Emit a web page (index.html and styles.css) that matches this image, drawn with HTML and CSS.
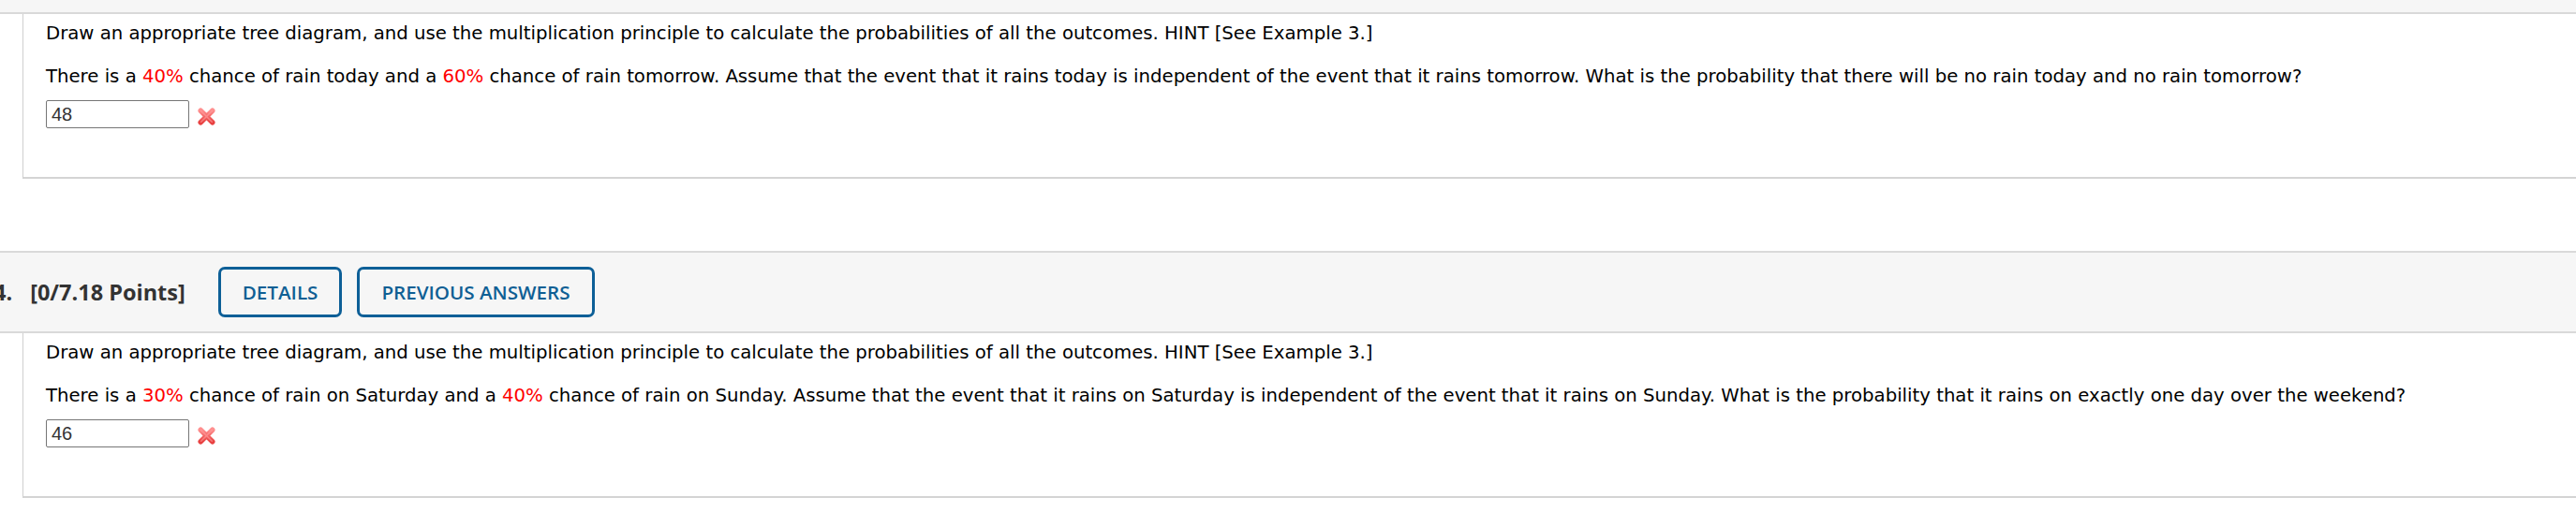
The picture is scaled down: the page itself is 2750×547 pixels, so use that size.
FILE: index.html
```
<!DOCTYPE html>
<html lang="en">
<head>
<meta charset="utf-8">
<title>Questions</title>
<link rel="stylesheet" href="styles.css">
</head>
<body>
<div class="topbar"></div>
<section class="qbox">
  <p class="qtext">Draw an appropriate tree diagram, and use the multiplication principle to calculate the probabilities of all the outcomes. HINT [See Example 3.]</p>
  <p class="qtext second">There is a <span class="red">40%</span> chance of rain today and a <span class="red">60%</span> chance of rain tomorrow. Assume that the event that it rains today is independent of the event that it rains tomorrow. What is the probability that there will be no rain today and no rain tomorrow?</p>
  <div class="answer">
    <input class="ans-input" type="text" value="48">
    <svg class="wrong" viewBox="0 0 20 20" width="21" height="21" aria-hidden="true">
      <defs>
        <linearGradient id="xg1" x1="0" y1="0" x2="0" y2="1">
          <stop offset="0" stop-color="#ff8f8f"/>
          <stop offset="1" stop-color="#e84040"/>
        </linearGradient>
      </defs>
      <path d="M4 4 L16 16 M16 4 L4 16" stroke="url(#xg1)" stroke-width="5.2" stroke-linecap="round" fill="none"/>
      <path d="M4.5 4.5 L15.5 15.5 M15.5 4.5 L4.5 15.5" stroke="#ffa0a0" stroke-width="1.4" stroke-linecap="round" fill="none" opacity="0.6"/>
    </svg>
  </div>
</section>

<header class="qhead">
  <span class="qnum">4.</span>
  <span class="qpts">[0/7.18 Points]</span>
  <div class="btns">
    <button class="btn">DETAILS</button>
    <button class="btn">PREVIOUS ANSWERS</button>
  </div>
</header>
<section class="qbox">
  <p class="qtext">Draw an appropriate tree diagram, and use the multiplication principle to calculate the probabilities of all the outcomes. HINT [See Example 3.]</p>
  <p class="qtext second">There is a <span class="red">30%</span> chance of rain on Saturday and a <span class="red">40%</span> chance of rain on Sunday. Assume that the event that it rains on Saturday is independent of the event that it rains on Sunday. What is the probability that it rains on exactly one day over the weekend?</p>
  <div class="answer">
    <input class="ans-input" type="text" value="46">
    <svg class="wrong" viewBox="0 0 20 20" width="21" height="21" aria-hidden="true">
      <defs>
        <linearGradient id="xg2" x1="0" y1="0" x2="0" y2="1">
          <stop offset="0" stop-color="#ff8f8f"/>
          <stop offset="1" stop-color="#e84040"/>
        </linearGradient>
      </defs>
      <path d="M4 4 L16 16 M16 4 L4 16" stroke="url(#xg2)" stroke-width="5.2" stroke-linecap="round" fill="none"/>
      <path d="M4.5 4.5 L15.5 15.5 M15.5 4.5 L4.5 15.5" stroke="#ffa0a0" stroke-width="1.4" stroke-linecap="round" fill="none" opacity="0.6"/>
    </svg>
  </div>
</section>
</body>
</html>
```
FILE: styles.css
```
html, body {
  margin: 0;
  padding: 0;
  background: #ffffff;
}
body {
  font-family: "DejaVu Sans", Verdana, sans-serif;
  color: #000;
  overflow: hidden;
}

.topbar {
  height: 13px;
  background: #f6f6f6;
  border-bottom: 2px solid #d9d9d9;
}

.qbox {
  margin-left: 24px;
  border-left: 1px solid #cfcfcf;
  border-bottom: 2px solid #d4d4d4;
  padding: 9px 0 52px 24px;
}

.qtext {
  margin: 0;
  font-size: 19.7px;
  line-height: 24px;
  white-space: nowrap;
}
.qtext.second {
  margin-top: 22px;
}
.red {
  color: #ff0000;
}

.answer {
  display: flex;
  align-items: flex-start;
  margin-top: 13px;
  gap: 8px;
}
.ans-input {
  box-sizing: border-box;
  width: 153px;
  height: 30px;
  margin: 0;
  padding: 0 5px;
  border: 1px solid #767676;
  border-radius: 2px;
  background: #fff;
  font-family: "Liberation Sans", Arial, sans-serif;
  font-size: 20px;
  color: #333;
  outline: none;
}
.wrong {
  display: block;
  margin-top: 7px;
}

.qhead {
  margin-top: 77px;
  background: #f6f6f6;
  border-top: 2px solid #d9d9d9;
  border-bottom: 2px solid #d9d9d9;
  padding: 15px 0 15px 0;
  display: flex;
  align-items: center;
  font-family: "Open Sans", sans-serif;
}
.qnum {
  margin-left: -7px;
  font-size: 23.5px;
  font-weight: 700;
  color: #333;
}
.qpts {
  margin-left: 19px;
  font-size: 23.5px;
  font-weight: 700;
  color: #333;
}
.btns {
  display: flex;
  gap: 16px;
  margin-left: 35px;
}
.btn {
  box-sizing: border-box;
  height: 54px;
  padding: 0 23px;
  border: 3px solid #0d5f97;
  border-radius: 7px;
  background: transparent;
  color: #0f5f94;
  font-family: "Open Sans", sans-serif;
  font-size: 20.6px;
  font-weight: 600;
  line-height: 1;
  cursor: pointer;
}
```
